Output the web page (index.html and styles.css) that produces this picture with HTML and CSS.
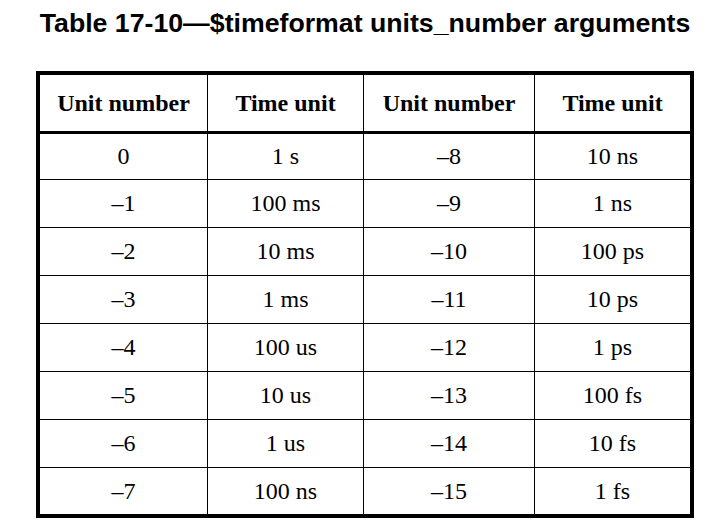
FILE: index.html
```html
<!DOCTYPE html>
<html>
<head>
<meta charset="utf-8">
<link rel="stylesheet" href="styles.css">
</head>
<body>
<div class="wrap">
  <h1 class="title">Table 17-10—$timeformat units_number arguments</h1>
  <div class="tbl">
    <div class="c h">Unit number</div><div class="c h">Time unit</div><div class="c h">Unit number</div><div class="c h last">Time unit</div>
    <div class="c">0</div><div class="c">1 s</div><div class="c">–8</div><div class="c last">10 ns</div>
    <div class="c">–1</div><div class="c">100 ms</div><div class="c">–9</div><div class="c last">1 ns</div>
    <div class="c">–2</div><div class="c">10 ms</div><div class="c">–10</div><div class="c last">100 ps</div>
    <div class="c">–3</div><div class="c">1 ms</div><div class="c">–11</div><div class="c last">10 ps</div>
    <div class="c">–4</div><div class="c">100 us</div><div class="c">–12</div><div class="c last">1 ps</div>
    <div class="c">–5</div><div class="c">10 us</div><div class="c">–13</div><div class="c last">100 fs</div>
    <div class="c">–6</div><div class="c">1 us</div><div class="c">–14</div><div class="c last">10 fs</div>
    <div class="c b">–7</div><div class="c b">100 ns</div><div class="c b">–15</div><div class="c b last">1 fs</div>
  </div>
</div>
</body>
</html>
```
FILE: styles.css
```css
html, body { margin: 0; padding: 0; background: #fff; }
.wrap {
  width: 658px;
  margin-left: 36px;
  padding-top: 8px;
}
.title {
  margin: 0;
  font-family: "Liberation Sans", Arial, sans-serif;
  font-weight: bold;
  font-size: 26.7px;
  line-height: 30px;
  text-align: center;
  color: #000;
}
.tbl {
  margin-top: 33px;
  display: grid;
  grid-template-columns: 168px 156px 171px 155px;
  grid-template-rows: 59px 46px repeat(6, 48px) 46px;
  border: 4px solid #000;
  font-family: "Liberation Serif", "Times New Roman", serif;
  font-size: 24px;
  color: #000;
}
.c {
  box-sizing: border-box;
  border-right: 1px solid #000;
  border-bottom: 1px solid #000;
  display: flex;
  align-items: center;
  justify-content: center;
}
.c.h {
  font-weight: bold;
  border-bottom: 3px solid #000;
}
.c.last { border-right: none; }
.c.b { border-bottom: none; }
```
